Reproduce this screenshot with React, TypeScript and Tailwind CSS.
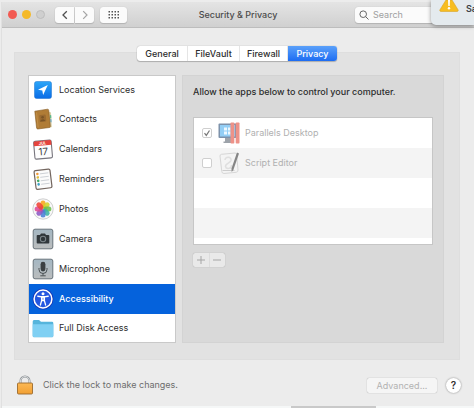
import { useState } from "react";
import type { ReactNode } from "react";

function LocationIcon() {
  return (
    <svg viewBox="0 0 22 22" className="size-[22px]" aria-hidden="true">
      <defs>
        <linearGradient id="loc" x1="0" y1="0" x2="0" y2="1">
          <stop offset="0" stopColor="#2ba6f8" />
          <stop offset="1" stopColor="#0a6ce6" />
        </linearGradient>
      </defs>
      <rect x="2.5" y="2.5" width="17" height="17" rx="2" fill="url(#loc)" stroke="#1a70cc" strokeWidth=".5" />
      <path d="M15.8 6 6 10.8l4.3.6.8 4.5z" fill="#fff" />
    </svg>
  );
}

function ContactsIcon() {
  return (
    <svg viewBox="0 0 22 22" className="size-[22px]" aria-hidden="true">
      <path d="M16.5 3.5 19 4.5 19.8 19 17.5 20z" fill="#d9cfa8" />
      <path d="m18 7 1.2.2.1 3-1.2.1z" fill="#5bb98c" />
      <path d="m18.3 11 1.1.2.1 3-1 .1z" fill="#4f9fd0" />
      <path d="M2.8 3.2 15.5 1.2q1 0 1.2 1l1.6 16q0 1-.8 1.3L5.8 21q-1 0-1.2-1z" fill="#b07c36" stroke="#85591f" strokeWidth=".6" />
      <path d="m4.5 4.5 1.7 15" stroke="#c9964f" strokeWidth=".7" />
      <rect x="7.500" y="6.800" width="6.500" height="7" rx="1" fill="#9a6a30" transform="rotate(-6 11 10)" />
      <circle cx="10.600" cy="9.300" r="1.300" fill="#7a5426" />
      <path d="M8.300 13.400c.2-2.600 4.300-3 4.900-.5" fill="#7a5426" />
    </svg>
  );
}

function CalendarIcon() {
  return (
    <svg viewBox="0 0 22 22" className="size-[22px]" aria-hidden="true">
      <g transform="rotate(-5 11 11)">
        <rect x="2.200" y="2.700" width="17.600" height="17.800" rx="1.500" fill="#fdfdfd" stroke="#77757d" strokeWidth="1.100" />
        <path d="M2.200 7.500V4q0-1.300 1.300-1.300h15q1.300 0 1.300 1.300v3.500z" fill="#e5443d" />
        <text x="11" y="6.700" fontSize="4" fontWeight="700" textAnchor="middle" fill="#fff" fontFamily="Inter, sans-serif">JUL</text>
        <text x="11" y="17.200" fontSize="10" textAnchor="middle" fill="#444" fontFamily="Inter, sans-serif">17</text>
      </g>
    </svg>
  );
}

function RemindersIcon() {
  return (
    <svg viewBox="0 0 22 22" className="size-[22px]" aria-hidden="true">
      <g transform="rotate(-7 11 11)">
        <rect x="3" y="1.800" width="16" height="18.800" rx="1.500" fill="#fbfbfb" stroke="#73665f" strokeWidth="1.200" />
        <path d="M8.500 5.500h8.500M8.500 9h8.500M8.500 12.500h8.500M8.500 16h8.500" stroke="#c4c8ce" strokeWidth=".8" />
        <circle cx="6" cy="5.300" r="1.300" fill="#f29a35" />
        <circle cx="6" cy="8.800" r="1.300" fill="#e0bb3a" />
        <circle cx="6" cy="12.300" r="1.300" fill="#43ab67" />
        <circle cx="6" cy="15.800" r="1.300" fill="#3d9fc5" />
      </g>
    </svg>
  );
}

const petals = ["#f9a51a", "#d4d32b", "#6bbf4b", "#3fb3a4", "#4a7fd6", "#8c5ac4", "#dc4a94", "#ef4437"];

function PhotosIcon() {
  return (
    <svg viewBox="0 0 22 22" className="size-[22px]" aria-hidden="true">
      <circle cx="11" cy="11" r="10.200" fill="#f8f8f8" stroke="#c9c9cb" strokeWidth=".9" />
      {petals.map((color, i) => (
        <rect key={color} x="8.500" y="2.600" width="5" height="8" rx="2.500" fill={color} fillOpacity=".88" transform={`rotate(${i * 45} 11 11)`} />
      ))}
    </svg>
  );
}

function MetalTile({ children }: { children: ReactNode }) {
  return (
    <svg viewBox="0 0 22 22" className="size-[22px]" aria-hidden="true">
      <defs>
        <linearGradient id="metal" x1="0" y1="0" x2="0" y2="1">
          <stop offset="0" stopColor="#a4b7c3" />
          <stop offset="1" stopColor="#bbbdbd" />
        </linearGradient>
      </defs>
      <rect x="1.200" y="1.200" width="19.600" height="19.600" rx="1.800" fill="url(#metal)" stroke="#69747b" strokeWidth="1" />
      {children}
    </svg>
  );
}

function CameraIcon() {
  return (
    <MetalTile>
      <path d="M5.500 7H8l1-1.500h4L14 7h2.500q.8 0 .8.800v7q0 .8-.8.800h-11q-.8 0-.8-.8v-7q0-.8.800-.8z" fill="#30373b" />
      <circle cx="11" cy="11" r="3.200" fill="#7d878c" />
      <circle cx="11" cy="11" r="2.200" fill="#30373b" />
    </MetalTile>
  );
}

function MicrophoneIcon() {
  return (
    <MetalTile>
      <rect x="8.600" y="3.800" width="4.800" height="9.600" rx="2.400" fill="#3a4043" />
      <path d="M7 10v1.500a4 4 0 0 0 8 0V10M11 15.500v2M8.300 17.800h5.400" fill="none" stroke="#4a5053" strokeWidth="1" />
    </MetalTile>
  );
}

function AccessibilityIcon() {
  return (
    <svg viewBox="0 0 22 22" className="size-[22px]" aria-hidden="true">
      <circle cx="11" cy="11" r="10.500" fill="#1738b8" />
      <circle cx="11" cy="11" r="8.900" fill="#2456e0" stroke="#fff" strokeWidth="1.500" />
      <circle cx="11" cy="5.800" r="1.500" fill="#fff" />
      <path d="M5.800 8.200 9.800 8.900h2.400l4-.7" fill="none" stroke="#fff" strokeWidth="1.400" strokeLinecap="round" />
      <path d="M9.600 8.700h2.800v4l1.200 4.300M9.600 8.700v4L8.400 17M10 9h2v3.500h-2z" fill="none" stroke="#fff" strokeWidth="1.300" strokeLinecap="round" />
    </svg>
  );
}

function FolderIcon() {
  return (
    <svg viewBox="0 0 22 22" className="size-[22px]" aria-hidden="true">
      <path d="M.700 4.500q0-1.500 1.300-1.500h5l2 1.800h11q1.300 0 1.300 1.200v13q0 1.200-1.200 1.200H2q-1.300 0-1.300-1.200z" fill="#56b5dc" />
      <path d="M.700 7.200h20.600v11.600q0 1.200-1.200 1.200H2q-1.300 0-1.300-1.200z" fill="#80d0f3" />
    </svg>
  );
}

function ParallelsIcon() {
  return (
    <svg viewBox="0 0 24 24" className="size-6 opacity-60" aria-hidden="true">
      <rect x="1.500" y="2.500" width="18" height="14.500" rx="1" fill="#284a75" />
      <rect x="3" y="4" width="15" height="11.500" fill="#4daef0" />
      <path d="M7 6.500h3v3H7zm4 0h2.500v3H11zm-4 4h3v3H7zm4 0h2.500v3H11z" fill="#e2f5ff" />
      <path d="M8 17h6v3.500H8zM6.500 20.500H15v1.500H6.500z" fill="#5d6772" />
      <rect x="13.500" y="1.500" width="3.800" height="21" rx=".8" fill="#e24a3a" />
      <rect x="18.700" y="1.500" width="3.800" height="21" rx=".8" fill="#e24a3a" />
    </svg>
  );
}

function ScriptEditorIcon() {
  return (
    <svg viewBox="0 0 24 24" className="size-6 opacity-60" aria-hidden="true">
      <path d="M3 5q0-1.500 1.500-1.700L18 2q2 0 1.700 2L21 19q.2 2-1.800 2.300L7 22.500q-2 0-2.200-2z" fill="#f4f4f4" stroke="#c4c4c4" />
      <path d="M8 9c0-4 7-3.500 6 .5-.7 2.500-6 3-5.500 6 .6 3 6.500 2.500 6-1.500" fill="none" stroke="#d2d2d2" strokeWidth="1.500" />
      <path d="M5.500 19.500h12" stroke="#b3b3b3" />
      <path d="m20 1.500 2 1-5.500 16-1.800 2.500-.2-3.500z" fill="#3d3d3d" />
    </svg>
  );
}

function LockIcon() {
  return (
    <svg viewBox="0 0 18 20" className="h-5 w-[18px]" aria-hidden="true">
      <defs>
        <linearGradient id="lock" x1="0" y1="0" x2="0" y2="1">
          <stop offset="0" stopColor="#fcb955" />
          <stop offset="1" stopColor="#f19f32" />
        </linearGradient>
      </defs>
      <path d="M4.500 9V6a4.500 4.500 0 0 1 9 0v3" fill="none" stroke="#8b8f93" strokeWidth="2" />
      <path d="M4.500 9V6a4.500 4.500 0 0 1 9 0v3" fill="none" stroke="#dfe2e4" strokeWidth=".9" />
      <rect x="1.500" y="8" width="15" height="11" rx="1" fill="url(#lock)" stroke="#9b6a2d" strokeWidth=".9" />
    </svg>
  );
}

const categories = [
  { name: "Location Services", icon: <LocationIcon /> },
  { name: "Contacts", icon: <ContactsIcon /> },
  { name: "Calendars", icon: <CalendarIcon /> },
  { name: "Reminders", icon: <RemindersIcon /> },
  { name: "Photos", icon: <PhotosIcon /> },
  { name: "Camera", icon: <CameraIcon /> },
  { name: "Microphone", icon: <MicrophoneIcon /> },
  { name: "Accessibility", icon: <AccessibilityIcon /> },
  { name: "Full Disk Access", icon: <FolderIcon /> },
];

const apps = [
  { id: "parallels", name: "Parallels Desktop", icon: <ParallelsIcon />, allowed: true },
  { id: "script-editor", name: "Script Editor", icon: <ScriptEditorIcon />, allowed: false },
];

const tabs = ["General", "FileVault", "Firewall", "Privacy"];

const toolButton = "flex h-4 items-center justify-center bg-[#fbfbfb] shadow-[0_0_1px_#0003,0_1px_1px_#0002]";

function TitleBar() {
  return (
    <header className="grid h-[26px] grid-cols-[1fr_auto_1fr] items-center border-b border-[#bdbdbd] bg-linear-to-b from-[#e4e4e4] to-[#d0d0d0]">
      <div className="flex items-center pl-[6px]">
        <div className="flex gap-[5px]">
          <button aria-label="Close" className="size-[9px] rounded-full bg-[#f25a52]" />
          <button aria-label="Minimize" className="size-[9px] rounded-full bg-[#f4b928]" />
          <button aria-label="Zoom" disabled className="size-[9px] rounded-full border border-[#bdbdbd] bg-[#cfcfcf]" />
        </div>
        <div className="ml-[10px] flex gap-px">
          <button aria-label="Back" className={`${toolButton} w-[19px] rounded-l-[3px]`}>
            <svg viewBox="0 0 8 10" className="h-[10px] w-2"><path d="M5.800 1.200 2 5l3.800 3.800" fill="none" stroke="#505050" strokeWidth="1.300" /></svg>
          </button>
          <button aria-label="Forward" className={`${toolButton} w-[19px] rounded-r-[3px]`}>
            <svg viewBox="0 0 8 10" className="h-[10px] w-2"><path d="M2.200 1.200 6 5 2.200 8.800" fill="none" stroke="#a5a5a5" strokeWidth="1.200" /></svg>
          </button>
        </div>
        <button aria-label="Show all" className={`${toolButton} ml-[6px] w-[27px] rounded-[3px]`}>
          <svg viewBox="0 0 12 8" className="h-2 w-3" fill="#555">
            {[0, 3, 6, 9].map((x) => [0, 3, 6].map((y) => <rect key={`${x}-${y}`} x={x + 0.500} y={y} width="1.500" height="1.500" />))}
          </svg>
        </button>
      </div>
      <h1 className="font-medium text-[#4c4c4c]">Security &amp; Privacy</h1>
      <div className="flex justify-end pr-[7px]">
        <label className="flex h-4 w-28 items-center gap-1 rounded-[3px] bg-[#fbfbfb] pl-1 shadow-[0_0_1px_#0003,0_1px_1px_#0002]">
          <svg viewBox="0 0 10 10" className="size-[10px] shrink-0" fill="none" stroke="#666" strokeWidth="1"><circle cx="4.200" cy="4.200" r="3.300" /><path d="m6.600 6.600 2.900 2.900" /></svg>
          <input type="search" aria-label="Search" placeholder="Search" className="w-full min-w-0 bg-transparent text-[#444] outline-none placeholder:text-[#a0a0a0]" />
        </label>
      </div>
    </header>
  );
}

function Notification() {
  return (
    <aside className="absolute top-0 right-0 z-20 flex h-[25px] w-[43px] items-start gap-[7px] overflow-hidden rounded-bl-[5px] bg-[#e4eaee] pl-2 shadow-[0_1px_4px_#0006]">
      <svg viewBox="0 0 20 12" className="h-3 w-5 shrink-0" aria-hidden="true">
        <path d="M7 0h6l6.200 10q.3 1.300-1 1.500H1.800Q.500 11.300.800 10z" fill="#f7bd21" stroke="#d8a42a" strokeWidth=".6" />
        <path d="M9 0h2l-.3 6H9.300z" fill="#fff" />
        <circle cx="10" cy="8.300" r="1.200" fill="#fff" />
      </svg>
      <span className="pt-[3px] leading-3 font-semibold text-[#3d4246]">Sa</span>
    </aside>
  );
}

export default function App() {
  const [selected, setSelected] = useState("Accessibility");

  return (
    <div className="relative min-h-screen overflow-hidden bg-[#ececec] pt-[2px] font-['Inter','Liberation_Sans',sans-serif] text-[9px] leading-4 text-[#2d2d2d]">
      <div className="ml-px border-l border-[#e0e0e0]">
        <TitleBar />
        <main className="pr-[14px] pl-3">
          <div role="tablist" className="relative z-10 mx-auto mt-[18px] grid h-[15px] w-[200px] grid-cols-[51px_52px_48px_49px] overflow-hidden rounded-[3px] bg-white shadow-[0_0_1px_#0006,0_1px_1px_#0003]">
            {tabs.map((tab) => (
              <button
                key={tab}
                role="tab"
                aria-selected={tab === "Privacy"}
                className={tab === "Privacy" ? "bg-linear-to-b from-[#5aa0fa] to-[#1c6cf2] leading-[15px] font-medium text-white" : "border-r border-[#e5e5e5] leading-[15px] font-medium"}
              >
                {tab}
              </button>
            ))}
          </div>

          <section className="-mt-[9px] flex gap-[6px] border border-[#dedede] bg-[#e2e2e2] pt-[22px] pr-[15px] pb-4 pl-[13px]">
            <ul className="w-[148px] shrink-0 border border-[#c9c9c9] bg-white">
              {categories.map(({ name, icon }) => (
                <li key={name} className="h-[30px] first:h-7 last:h-7">
                  <button
                    onClick={() => setSelected(name)}
                    className={`flex size-full items-center gap-[5px] pl-[3px] text-left ${name === selected ? "bg-[#0562dc] font-medium text-white" : ""}`}
                  >
                    {icon}
                    {name}
                  </button>
                </li>
              ))}
            </ul>

            <div className="min-w-0 flex-1 border border-[#d3d3d3] bg-[#d9d9d9] px-[10px] pt-2">
              <h2 className="font-medium">Allow the apps below to control your computer.</h2>
              <ul className="mt-[17px] h-32 overflow-hidden border border-[#c6c6c6] bg-white">
                {apps.map(({ id, name, icon, allowed }) => (
                  <li key={id} className="h-[30px] even:bg-[#f4f4f4]">
                    <label className="flex h-full items-center pl-2 text-[#b0b0b0]">
                      <span className="grid size-[10px] place-items-center">
                        <input type="checkbox" disabled defaultChecked={allowed} className="peer col-start-1 row-start-1 size-[10px] appearance-none rounded-[2px] border border-[#cfcfcf] bg-white" />
                        <svg viewBox="0 0 10 10" className="col-start-1 row-start-1 hidden size-[10px] peer-checked:block" aria-hidden="true"><path d="m2.500 5.200 1.800 2.200L7.500 2.500" fill="none" stroke="#777" strokeWidth="1.200" /></svg>
                      </span>
                      <span className="mr-1 ml-[5px]">{icon}</span>
                      {name}
                    </label>
                  </li>
                ))}
                <li className="h-[30px]" />
                <li className="h-[30px] bg-[#f4f4f4]" />
              </ul>
              <div className="mt-2 flex h-[14px] w-8 rounded-[2px] bg-[#e9e9e9] shadow-[0_0_1px_#0005]">
                <button aria-label="Add app" disabled className="flex flex-1 items-center justify-center border-r border-[#dcdcdc]">
                  <svg viewBox="0 0 8 8" className="size-2"><path d="M4 0v8M0 4h8" stroke="#a5a5a5" /></svg>
                </button>
                <button aria-label="Remove app" disabled className="flex flex-1 items-center justify-center">
                  <svg viewBox="0 0 8 8" className="size-2"><path d="M0 4h8" stroke="#a5a5a5" /></svg>
                </button>
              </div>
            </div>
          </section>
        </main>

        <footer className="flex items-center pt-[15px] pr-[13px] pb-[11px] pl-[14px]">
          <button className="flex items-center gap-[9px] text-[#6d6d6d]">
            <LockIcon />
            Click the lock to make changes.
          </button>
          <button disabled className="ml-auto h-[15px] w-[70px] rounded-[2px] bg-[#f5f5f5] leading-[15px] text-[#b2b2b2] shadow-[0_0_1px_#0006]">Advanced...</button>
          <button aria-label="Help" className="ml-[9px] size-[15px] rounded-full bg-white text-[10px] leading-[15px] font-semibold shadow-[0_0_2px_#0007]">?</button>
        </footer>
        <div className="flex h-[3px] bg-[#f5f7f7]">
          <div className="ml-auto h-full w-[85px] bg-[#c9c9c9]" />
          <div className="w-[98px]" />
        </div>
      </div>
      <Notification />
    </div>
  );
}
